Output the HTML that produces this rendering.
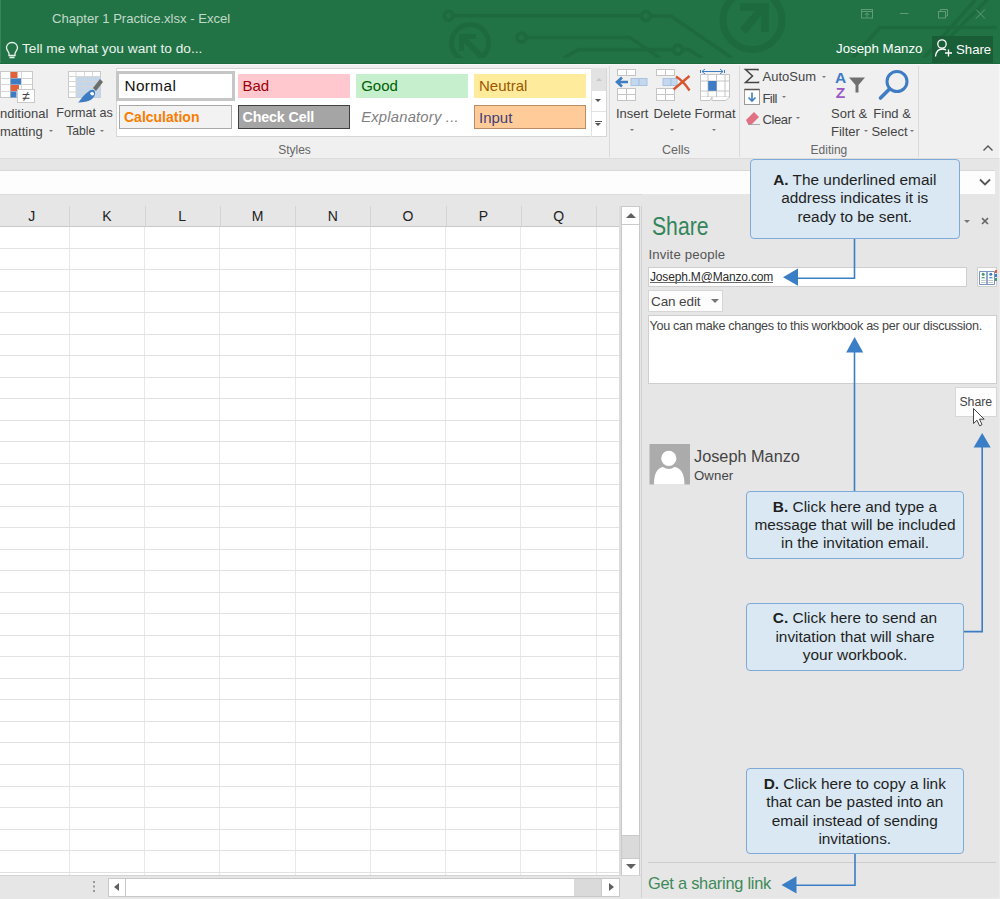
<!DOCTYPE html>
<html><head><meta charset="utf-8">
<style>
*{margin:0;padding:0;box-sizing:border-box}
html,body{width:1000px;height:899px;overflow:hidden;background:#e6e6e6;font-family:"Liberation Sans",sans-serif}
.a{position:absolute;white-space:nowrap}
#title{left:0;top:0;width:1000px;height:64px;background:#217346;overflow:hidden}
#ribbon{left:0;top:64px;width:1000px;height:94px;background:#f0f0f0;border-top:1px solid #f7f7f7}
.rt{font-size:13px;color:#444}
.gl{font-size:12.5px;color:#666}
.cell{position:absolute;height:25px;font-size:14.5px;padding-left:5px;line-height:24px}
.callout{position:absolute;background:#d9e8f3;border:1px solid #7fa9d8;border-radius:4px;font-size:15.4px;color:#1f1f1f;text-align:center;line-height:18.35px}
.callout b{font-weight:bold}
</style></head><body>

<!-- TITLE BAR -->
<div id="title" class="a">
<svg class="a" style="left:0;top:0" width="1000" height="58" viewBox="0 0 1000 58">
 <g fill="none" stroke="#1e6a3f" stroke-width="3.6">
  <circle cx="448.6" cy="15.6" r="4.5"/>
  <path d="M453 15.6 H641.5"/>
  <circle cx="646" cy="16" r="4.5"/>
  <path d="M650.5 16 H671 L732 58"/>
  <circle cx="521.5" cy="37.5" r="4.5"/>
  <path d="M526 37.5 H630 L660 58"/>
  <path d="M563.5 58 L578.5 49.6 H673.5"/>
  <circle cx="678" cy="49.6" r="4.5"/>
  <path d="M682.5 49.6 H689 L702 58"/>
  <path d="M852.5 58 L880 27.5 H997"/>
  <path d="M924 58 L975 0"/>
  <path d="M940 47 L992 -5"/>
 </g>
 <g fill="none" stroke="#1e6a3f" stroke-width="5">
  <circle cx="470" cy="43" r="18.5"/>
 </g>
 <g fill="#1e6a3f">
  <path d="M459 34 H476 V39 H468 L482 53 L478 57 L464 43 V51 H459 Z"/>
 </g>
 <g fill="none" stroke="#1e6a3f" stroke-width="7">
  <circle cx="752.5" cy="20" r="29.5"/>
 </g>
 <g fill="#1e6a3f">
  <path d="M740 3 H769 V32 H761 V16 L746 34 L740 28 L755 11 H740 Z"/>
 </g>
</svg>
<div class="a" style="left:52px;top:10.6px;font-size:13.1px;color:#c1d9c9">Chapter 1 Practice.xlsx - Excel</div>
<!-- window controls -->
<svg class="a" style="left:855px;top:4px" width="140" height="20" viewBox="855 4 140 20">
 <g fill="none" stroke="#5f9c77" stroke-width="1">
  <rect x="861.5" y="9.5" width="11" height="8.5"/>
  <path d="M861.5 11.5 H872.5 M867 17.5 V13 M864.8 15 L867 12.8 L869.2 15"/>
  <path d="M900 13.5 H908.5"/>
  <rect x="938.5" y="11.5" width="7" height="6.5"/>
  <path d="M940.5 11.5 V9.5 H947.5 V16 H945.5"/>
  <path d="M976 9.5 L985 18.5 M985 9.5 L976 18.5"/>
 </g>
</svg>
<!-- tell me -->
<svg class="a" style="left:4px;top:41px" width="16" height="18" viewBox="0 0 16 18">
 <path d="M8 1.5 C4.5 1.5 2.5 4 2.5 6.8 C2.5 9.2 4.5 10.5 5 12.5 V14.5 H11 V12.5 C11.5 10.5 13.5 9.2 13.5 6.8 C13.5 4 11.5 1.5 8 1.5 Z M5.5 16.5 H10.5" fill="none" stroke="#e8f1eb" stroke-width="1.3"/>
</svg>
<div class="a" style="left:22px;top:41.4px;font-size:13.7px;color:#eaf2ec">Tell me what you want to do...</div>
<div class="a" style="left:836px;top:41px;font-size:13.3px;color:#fff">Joseph Manzo</div>
<div class="a" style="left:932px;top:36px;width:61px;height:28px;background:#1a5e38"></div>
<svg class="a" style="left:934px;top:38px" width="20" height="20" viewBox="0 0 20 20">
 <g fill="none" stroke="#fff" stroke-width="1.3">
  <circle cx="8" cy="6" r="4.2"/>
  <path d="M1.5 18.5 C2 13.5 5 11 8.5 11 C10 11 11 11.3 12 12"/>
  <path d="M14.5 11.5 V18.5 M11 15 H18"/>
 </g>
</svg>
<div class="a" style="left:956px;top:42px;font-size:13.2px;color:#fff">Share</div>
</div>

<!-- RIBBON -->
<div id="ribbon" class="a"></div>

<!-- ribbon content -->
<div class="a" style="left:115.5px;top:67.5px;width:491px;height:69px;background:#fff;border:1px solid #d6d6d6"></div>
<!-- conditional formatting icon -->
<svg class="a" style="left:0;top:70px" width="40" height="34" viewBox="0 70 40 34">
 <g fill="#fff" stroke="#c8c8c8" stroke-width="1">
  <rect x="0.5" y="71.5" width="32" height="26"/>
 </g>
 <g stroke="#d4d4d4" stroke-width="1">
  <path d="M0.5 78.5 H32.5 M0.5 84.5 H32.5 M0.5 91.5 H32.5 M10.5 71.5 V97.5 M21.5 71.5 V97.5"/>
 </g>
 <rect x="10.5" y="72" width="7" height="6" fill="#e0613a"/>
 <rect x="10.5" y="78.5" width="10.5" height="6" fill="#3e7cc4"/>
 <rect x="10.5" y="85" width="8.5" height="6" fill="#e0613a"/>
 <rect x="10.5" y="91.5" width="6" height="6" fill="#3e7cc4"/>
 <rect x="17.5" y="89.5" width="17" height="13" fill="#fff" stroke="#c8c8c8"/>
 <text x="26" y="100.5" font-size="14" text-anchor="middle" fill="#444" font-family="Liberation Sans">≠</text>
</svg>
<div class="a rt" style="left:0;top:106.2px">nditional</div>
<div class="a rt" style="left:0;top:124px">matting</div>
<div class="a" style="left:49px;top:130px;border-left:2.5px solid transparent;border-right:2.5px solid transparent;border-top:2.5px solid #777"></div>
<!-- format as table icon -->
<svg class="a" style="left:66px;top:69px" width="40" height="36" viewBox="66 69 40 36">
 <rect x="68.5" y="71.5" width="32" height="26" fill="#fff" stroke="#c8c8c8"/>
 <rect x="76" y="76.5" width="24.5" height="21" fill="#c3d6ec"/>
 <g stroke="#d6d6d6" stroke-width="1" fill="none">
  <path d="M68.5 76.5 H100.5 M68.5 81.5 H100.5 M68.5 86.5 H100.5 M68.5 92 H100.5 M76 71.5 V97.5 M84.5 71.5 V97.5 M92.5 71.5 V97.5"/>
 </g>
 <path d="M93 88 L100 79 L103 82 L96 91 Z" fill="#6d6d6d"/>
 <path d="M88 92 C92 88 96 90 95 94 C94 99 90 102 78 102.5 C81 100 84 94 88 92 Z" fill="#3e7cc4"/>
 <path d="M90 93 C92 91 94.5 92 94 94.5 C93 96 91 96 90 93 Z" fill="#fff"/>
</svg>
<div class="a rt" style="left:56.2px;top:106.2px;font-size:12.6px">Format as</div>
<div class="a rt" style="left:66.2px;top:124px;font-size:12.2px">Table</div>
<div class="a" style="left:100px;top:130px;border-left:2.5px solid transparent;border-right:2.5px solid transparent;border-top:2.5px solid #777"></div>

<!-- styles cells -->
<div class="a" style="left:116.3px;top:71px;width:118.3px;height:30.1px;border:3px solid #c6c6c6;background:#fff"></div>
<div class="a" style="left:124.5px;top:77px;font-size:15.3px;letter-spacing:0.4px;color:#111">Normal</div>
<div class="a" style="left:237.5px;top:73.8px;width:112px;height:24.2px;background:#ffc7ce"></div>
<div class="a" style="left:242.5px;top:77px;font-size:15px;color:#9c0006">Bad</div>
<div class="a" style="left:356px;top:73.8px;width:112px;height:24.2px;background:#c6efce"></div>
<div class="a" style="left:361.2px;top:77px;font-size:15px;color:#006100">Good</div>
<div class="a" style="left:474px;top:73.8px;width:112px;height:24.2px;background:#ffeb9c"></div>
<div class="a" style="left:479px;top:77px;font-size:15px;color:#9c5700">Neutral</div>
<div class="a" style="left:119px;top:104.6px;width:112.5px;height:24.4px;background:#f2f2f2;border:1px solid #a8a8a8"></div>
<div class="a" style="left:124px;top:109px;font-size:14px;font-weight:bold;color:#fa7d00">Calculation</div>
<div class="a" style="left:237.5px;top:104.6px;width:112px;height:24.4px;background:#a5a5a5;border:1.5px solid #3f3f3f"></div>
<div class="a" style="left:242.5px;top:108.9px;font-size:14.3px;font-weight:bold;color:#fff;letter-spacing:-0.15px">Check Cell</div>
<div class="a" style="left:361.2px;top:108.6px;font-size:14.8px;letter-spacing:0.2px;font-style:italic;color:#7f7f7f">Explanatory ...</div>
<div class="a" style="left:474px;top:104.6px;width:112px;height:24.4px;background:#ffcc99;border:1px solid #b88c66"></div>
<div class="a" style="left:479px;top:108.6px;font-size:15px;color:#3f3f76">Input</div>
<!-- gallery scroll -->
<div class="a" style="left:590.5px;top:67.5px;width:16px;height:69px;border-left:1px solid #e2e2e2"></div>
<div class="a" style="left:591px;top:68px;width:15px;height:22.5px;background:#e2e2e2"></div>
<div class="a" style="left:591px;top:111px;width:15px;height:1px;background:#e2e2e2"></div>
<div class="a" style="left:595.5px;top:78px;border-left:3.5px solid transparent;border-right:3.5px solid transparent;border-bottom:3.5px solid #c8c8c8"></div>
<div class="a" style="left:595px;top:99px;border-left:3.5px solid transparent;border-right:3.5px solid transparent;border-top:3.5px solid #555"></div>
<div class="a" style="left:595px;top:120.5px;width:7px;height:1px;background:#555"></div>
<div class="a" style="left:595px;top:123px;border-left:3.5px solid transparent;border-right:3.5px solid transparent;border-top:3.5px solid #555"></div>
<div class="a gl" style="left:278.2px;top:143.4px;font-size:12px">Styles</div>
<div class="a" style="left:609px;top:66px;width:1px;height:91px;background:#dadada"></div>

<!-- Cells group -->
<svg class="a" style="left:612px;top:66px" width="125" height="38" viewBox="612 66 125 38">
 <g fill="#fff" stroke="#c4c4c4" stroke-width="1">
  <rect x="617.5" y="69.5" width="9" height="6"/><rect x="626.5" y="69.5" width="9" height="6"/>
  <rect x="617.5" y="88.5" width="9" height="6"/><rect x="626.5" y="88.5" width="9" height="6"/>
  <rect x="617.5" y="94.5" width="9" height="6"/><rect x="626.5" y="94.5" width="9" height="6"/>
  <rect x="656.5" y="69.5" width="9" height="6"/><rect x="665.5" y="69.5" width="9" height="6"/>
  <rect x="656.5" y="88.5" width="9" height="6"/><rect x="665.5" y="88.5" width="9" height="6"/>
  <rect x="656.5" y="94.5" width="9" height="6"/><rect x="665.5" y="94.5" width="9" height="6"/>
 </g>
 <g fill="#c3d7ee" stroke="#a9c2de" stroke-width="1">
  <rect x="631" y="78.5" width="8" height="7"/><rect x="639" y="78.5" width="8" height="7"/>
  <rect x="663" y="78.5" width="8" height="7"/><rect x="671" y="78.5" width="6" height="7"/>
 </g>
 <path d="M628 82 H618 M622 77.5 L617 82 L622 86.5" fill="none" stroke="#3e7cc4" stroke-width="2.6"/>
 <path d="M673.5 89.5 L689.5 76 M676 76.5 C680 79 686 85 689.5 90.5" fill="none" stroke="#d9552f" stroke-width="2.4"/>
 <path d="M700.5 70 V73 M724.5 70 V73 M702 71.5 H723 M705 69 L702 71.5 L705 74 M720 69 L723 71.5 L720 74" fill="none" stroke="#3e7cc4" stroke-width="1"/>
 <g fill="#fff" stroke="#c4c4c4" stroke-width="1">
  <path d="M700.5 74.5 H729.5 V97 H700.5 Z"/>
  <path d="M700.5 81 H729.5 M700.5 91 H729.5 M708 74.5 V97 M716.5 74.5 V97 M725 74.5 V97"/>
  <path d="M700.5 97 V100.5 H710 L712 97 M712 97 V100.5 H726 L729.5 97"/>
 </g>
 <rect x="708.2" y="81" width="8.4" height="9.8" fill="#3e7cc4"/>
</svg>
<div class="a rt" style="left:615.9px;top:106.2px">Insert</div>
<div class="a rt" style="left:653.6px;top:106.2px">Delete</div>
<div class="a rt" style="left:694.5px;top:106.2px">Format</div>
<div class="a" style="left:630px;top:129px;border-left:2.5px solid transparent;border-right:2.5px solid transparent;border-top:2.5px solid #777"></div>
<div class="a" style="left:670px;top:129px;border-left:2.5px solid transparent;border-right:2.5px solid transparent;border-top:2.5px solid #777"></div>
<div class="a" style="left:712.2px;top:129px;border-left:2.5px solid transparent;border-right:2.5px solid transparent;border-top:2.5px solid #777"></div>
<div class="a gl" style="left:662px;top:143.4px">Cells</div>
<div class="a" style="left:739px;top:66px;width:1px;height:91px;background:#dadada"></div>

<!-- Editing group -->
<svg class="a" style="left:743px;top:68px" width="17" height="17" viewBox="743 68 17 17"><path d="M758 70.5 V69.5 H745.5 L752.5 76 L745.5 82.5 H758.5 V81.5" fill="none" stroke="#444" stroke-width="1.5"/></svg>
<div class="a rt" style="left:762.5px;top:69.3px">AutoSum</div>
<div class="a" style="left:822px;top:76px;border-left:2.5px solid transparent;border-right:2.5px solid transparent;border-top:2.5px solid #777"></div>
<svg class="a" style="left:742px;top:87px" width="22" height="40" viewBox="742 87 22 40">
 <rect x="744.5" y="89.5" width="15" height="15" fill="#fff" stroke="#9a9a9a"/>
 <path d="M744.5 89.5 H759.5" stroke="#555" stroke-width="1.5"/>
 <path d="M752 92.5 V101 M748.5 97.5 L752 101 L755.5 97.5" fill="none" stroke="#3e7cc4" stroke-width="1.6"/>
 <path d="M746 120 L754 112 L759 117 L751 125 H748.5 Z" fill="#e27084"/>
 <path d="M748 124.5 H760" stroke="#999" stroke-width="0.8"/>
</svg>
<div class="a rt" style="left:762.5px;top:90.6px;font-size:13px;letter-spacing:-0.6px">Fill</div>
<div class="a" style="left:782px;top:96px;border-left:2.5px solid transparent;border-right:2.5px solid transparent;border-top:2.5px solid #777"></div>
<div class="a rt" style="left:762.5px;top:111.6px;font-size:13px;letter-spacing:-0.4px">Clear</div>
<div class="a" style="left:796px;top:117px;border-left:2.5px solid transparent;border-right:2.5px solid transparent;border-top:2.5px solid #777"></div>
<svg class="a" style="left:830px;top:66px" width="85" height="38" viewBox="830 66 85 38">
 <text x="840.5" y="83" font-size="15.5" font-weight="bold" text-anchor="middle" fill="#3e7cc4" font-family="Liberation Sans">A</text>
 <text x="840.5" y="98.3" font-size="15.5" font-weight="bold" text-anchor="middle" fill="#9b59c5" font-family="Liberation Sans">Z</text>
 <path d="M849 77.5 H865 L858.5 85 V92.5 H855.5 V85 Z" fill="#707070"/>
 <circle cx="897" cy="81.5" r="10" fill="none" stroke="#3e7cc4" stroke-width="3"/>
 <path d="M889.5 89 L880.5 98" stroke="#3e7cc4" stroke-width="3.6" stroke-linecap="round"/>
</svg>
<div class="a rt" style="left:831px;top:105.8px">Sort &amp;</div>
<div class="a rt" style="left:873.3px;top:105.8px">Find &amp;</div>
<div class="a rt" style="left:831px;top:123.5px">Filter</div>
<div class="a rt" style="left:871.4px;top:123.5px">Select</div>
<div class="a" style="left:864px;top:129.5px;border-left:2.5px solid transparent;border-right:2.5px solid transparent;border-top:2.5px solid #777"></div>
<div class="a" style="left:910px;top:129.5px;border-left:2.5px solid transparent;border-right:2.5px solid transparent;border-top:2.5px solid #777"></div>
<div class="a gl" style="left:810.6px;top:143.4px;font-size:12px">Editing</div>
<div class="a" style="left:918px;top:66px;width:1px;height:91px;background:#dadada"></div>
<svg class="a" style="left:982px;top:144px" width="12" height="8" viewBox="0 0 12 8"><path d="M1.5 6.5 L6 2 L10.5 6.5" fill="none" stroke="#555" stroke-width="1.4"/></svg>

<div class="a" style="left:0;top:0;width:1px;height:64px;background:#3a8459"></div><div class="a" style="left:0;top:63px;width:1000px;height:1px;background:#1e6a3f"></div>
<div class="a" style="left:0;top:158px;width:1000px;height:12px;background:#e6e6e6;border-top:1px solid #dcdcdc"></div>
<div class="a" style="left:0;top:170px;width:995px;height:24px;background:#fdfdfd;border-top:1px solid #d8d8d8"></div>


<!-- FORMULA BAR / HEADER / GRID -->
<svg class="a" style="left:976px;top:176px" width="18" height="12" viewBox="976 176 18 12"><path d="M980 179.5 L985 184.5 L990 179.5" fill="none" stroke="#555" stroke-width="1.8"/></svg>
<div class="a" style="left:0;top:194px;width:642px;height:33px;background:#e6e6e6;border-top:1px solid #dadada"></div>
<svg class="a" style="left:0;top:0" width="642" height="899" viewBox="0 0 642 899" shape-rendering="crispEdges">
 <rect x="0" y="227" width="619.5" height="648" fill="#fff"/>
 <rect x="0" y="226" width="620" height="1" fill="#c9c9c9"/>
 <g fill="#d4d4d4"><rect x="69" y="206" width="1" height="20"/><rect x="145" y="206" width="1" height="20"/><rect x="220" y="206" width="1" height="20"/><rect x="295" y="206" width="1" height="20"/><rect x="370" y="206" width="1" height="20"/><rect x="446" y="206" width="1" height="20"/><rect x="521" y="206" width="1" height="20"/><rect x="596" y="206" width="1" height="20"/></g>
 <g fill="#e8e8e8"><rect x="69" y="227" width="1" height="648"/><rect x="144" y="227" width="1" height="648"/><rect x="219" y="227" width="1" height="648"/><rect x="295" y="227" width="1" height="648"/><rect x="370" y="227" width="1" height="648"/><rect x="445" y="227" width="1" height="648"/><rect x="520" y="227" width="1" height="648"/><rect x="596" y="227" width="1" height="648"/></g><g fill="#e1e1e1"><rect x="0" y="248" width="620" height="1"/><rect x="0" y="269" width="620" height="1"/><rect x="0" y="291" width="620" height="1"/><rect x="0" y="312" width="620" height="1"/><rect x="0" y="334" width="620" height="1"/><rect x="0" y="355" width="620" height="1"/><rect x="0" y="377" width="620" height="1"/><rect x="0" y="398" width="620" height="1"/><rect x="0" y="420" width="620" height="1"/><rect x="0" y="441" width="620" height="1"/><rect x="0" y="463" width="620" height="1"/><rect x="0" y="484" width="620" height="1"/><rect x="0" y="506" width="620" height="1"/><rect x="0" y="527" width="620" height="1"/><rect x="0" y="549" width="620" height="1"/><rect x="0" y="570" width="620" height="1"/><rect x="0" y="592" width="620" height="1"/><rect x="0" y="613" width="620" height="1"/><rect x="0" y="635" width="620" height="1"/><rect x="0" y="656" width="620" height="1"/><rect x="0" y="678" width="620" height="1"/><rect x="0" y="699" width="620" height="1"/><rect x="0" y="721" width="620" height="1"/><rect x="0" y="742" width="620" height="1"/><rect x="0" y="764" width="620" height="1"/><rect x="0" y="786" width="620" height="1"/><rect x="0" y="807" width="620" height="1"/><rect x="0" y="829" width="620" height="1"/><rect x="0" y="850" width="620" height="1"/><rect x="0" y="872" width="620" height="1"/></g>
</svg>
<div class="a" style="left:11.7px;top:207.5px;width:40px;text-align:center;font-size:14px;color:#222">J</div><div class="a" style="left:87.0px;top:207.5px;width:40px;text-align:center;font-size:14px;color:#222">K</div><div class="a" style="left:162.2px;top:207.5px;width:40px;text-align:center;font-size:14px;color:#222">L</div><div class="a" style="left:237.5px;top:207.5px;width:40px;text-align:center;font-size:14px;color:#222">M</div><div class="a" style="left:312.8px;top:207.5px;width:40px;text-align:center;font-size:14px;color:#222">N</div><div class="a" style="left:388.0px;top:207.5px;width:40px;text-align:center;font-size:14px;color:#222">O</div><div class="a" style="left:463.3px;top:207.5px;width:40px;text-align:center;font-size:14px;color:#222">P</div><div class="a" style="left:538.6px;top:207.5px;width:40px;text-align:center;font-size:14px;color:#222">Q</div>
<!-- vertical scrollbar -->
<div class="a" style="left:619px;top:206px;width:2px;height:669px;background:#dcdcdc"></div>
<div class="a" style="left:621px;top:206px;width:19px;height:19px;background:#fff;border:1px solid #c9c9c9"></div>
<div class="a" style="left:625.5px;top:213px;border-left:5px solid transparent;border-right:5px solid transparent;border-bottom:5.3px solid #606060"></div>
<div class="a" style="left:621px;top:225px;width:19px;height:611px;background:#fff;border:1px solid #c9c9c9;border-top:none"></div>
<div class="a" style="left:621px;top:836px;width:19px;height:22px;background:#dadada;border-left:1px solid #c9c9c9;border-right:1px solid #c9c9c9"></div>
<div class="a" style="left:621px;top:857.5px;width:19px;height:18px;background:#fff;border:1px solid #c9c9c9"></div>
<div class="a" style="left:625.5px;top:863.5px;border-left:5px solid transparent;border-right:5px solid transparent;border-top:5.3px solid #606060"></div>
<div class="a" style="left:641px;top:205.5px;width:1px;height:694px;background:#d2d2d2"></div>
<!-- horizontal scrollbar -->
<div class="a" style="left:0;top:875px;width:641px;height:24px;background:#e6e6e6;border-top:1px solid #d4d4d4"></div>
<div class="a" style="left:93px;top:881px;width:2px;height:2px;background:#999;box-shadow:0 4.5px 0 #999,0 9px 0 #999"></div>
<div class="a" style="left:107.5px;top:878px;width:19px;height:18.5px;background:#fff;border:1px solid #c9c9c9"></div>
<div class="a" style="left:113.5px;top:883px;border-top:4.5px solid transparent;border-bottom:4.5px solid transparent;border-right:5px solid #606060"></div>
<div class="a" style="left:125px;top:878px;width:449.5px;height:18.5px;background:#fff;border:1px solid #c9c9c9;border-right:none"></div>
<div class="a" style="left:574px;top:878px;width:28px;height:18.5px;background:#dadada;border-top:1px solid #c9c9c9;border-bottom:1px solid #c9c9c9"></div>
<div class="a" style="left:601px;top:878px;width:19px;height:18.5px;background:#fff;border:1px solid #c9c9c9"></div>
<div class="a" style="left:609px;top:883px;border-top:4.5px solid transparent;border-bottom:4.5px solid transparent;border-left:5px solid #606060"></div>


<!-- SHARE PANE -->
<div class="a" style="left:652px;top:211.8px;font-size:25.5px;color:#33855a;transform:scaleX(0.83);transform-origin:0 0">Share</div>
<div class="a" style="left:963.5px;top:220px;border-left:3px solid transparent;border-right:3px solid transparent;border-top:3px solid #777"></div>
<svg class="a" style="left:980px;top:216px" width="10" height="10" viewBox="980 216 10 10"><path d="M982 218.2 L988 224 M988 218.2 L982 224" stroke="#666" stroke-width="1.6"/></svg>
<div class="a" style="left:648.5px;top:247.3px;font-size:13.2px;color:#555;letter-spacing:0.15px">Invite people</div>
<div class="a" style="left:648px;top:267px;width:319px;height:20px;background:#fff;border:1px solid #cfcfcf"></div>
<div class="a" style="left:650px;top:270.3px;font-size:12px;color:#2b2b2b;letter-spacing:-0.17px;">Joseph.M@Manzo.com</div>
<div class="a" style="left:650px;top:282.2px;width:123px;height:1px;background:#6a6a6a"></div>
<svg class="a" style="left:976px;top:266px" width="22" height="22" viewBox="976 266 22 22">
 <rect x="977.5" y="267.5" width="19" height="19" fill="#fdfdfd" stroke="#d0d0d0"/>
 <path d="M979.5 271.5 H986.8 V284.5 H979.5 Z M987.2 271.5 H994.5 V284.5 H987.2 Z" fill="#fff" stroke="#6b88b5" stroke-width="0.9"/>
 <circle cx="983.2" cy="274.3" r="1.5" fill="#3e9c6f"/><path d="M981 278.3 Q983.2 275.6 985.4 278.3 Z" fill="#3e9c6f"/>
 <circle cx="990.8" cy="274.3" r="1.5" fill="#3e7cc4"/><path d="M988.6 278.3 Q990.8 275.6 993 278.3 Z" fill="#3e7cc4"/>
 <path d="M981 280.5 H985.5 M981 282.5 H985.5 M988.5 280.5 H993 M988.5 282.5 H993" stroke="#aaa" stroke-width="0.7"/>
 <rect x="995" y="270" width="2" height="3" fill="#e0613a"/><rect x="995" y="274" width="2" height="3" fill="#3e7cc4"/><rect x="995" y="278" width="2" height="3" fill="#3e9c6f"/>
</svg>
<div class="a" style="left:648px;top:290px;width:75px;height:22px;background:#fdfdfd;border:1px solid #d6d6d6"></div>
<div class="a" style="left:651px;top:293.6px;font-size:13.5px;color:#444;letter-spacing:-0.1px">Can edit</div>
<div class="a" style="left:710.5px;top:299px;border-left:4px solid transparent;border-right:4px solid transparent;border-top:4px solid #777"></div>
<div class="a" style="left:648px;top:315px;width:349px;height:69px;background:#fff;border:1px solid #cfcfcf"></div>
<div class="a" style="left:649.5px;top:318.8px;font-size:12.6px;color:#444;letter-spacing:-0.31px">You can make changes to this workbook as per our discussion.</div>
<div class="a" style="left:955px;top:387px;width:41.5px;height:29.5px;background:#fdfdfd;border:1px solid #d6d6d6"></div>
<div class="a" style="left:959.4px;top:395.2px;font-size:12.3px;color:#444">Share</div>
<svg class="a" style="left:970px;top:406px" width="18" height="24" viewBox="970 406 18 24">
 <path d="M973.5 408.5 V423.5 L977 420.2 L979.6 425.8 L982 424.7 L979.5 419.2 H984.2 Z" fill="#fff" stroke="#333" stroke-width="0.9" stroke-linejoin="round"/>
</svg>
<svg class="a" style="left:648px;top:443px" width="44" height="43" viewBox="648 443 44 43">
 <rect x="649.5" y="444" width="40.5" height="40.5" fill="#ababab"/>
 <circle cx="668.8" cy="458.4" r="7.6" fill="#fff"/>
 <path d="M654 484.5 C654 472 658 468 663 467 Q668.8 471 674.6 467 C680 468 684.5 472 684.5 484.5 Z" fill="#fff"/>
</svg>
<div class="a" style="left:694px;top:447.3px;font-size:16.3px;color:#444">Joseph Manzo</div>
<div class="a" style="left:694px;top:468px;font-size:13.2px;color:#444;letter-spacing:0.1px">Owner</div>
<div class="a" style="left:648px;top:862px;width:348px;height:1px;background:#cdcdcd"></div>
<div class="a" style="left:648px;top:874.4px;font-size:16.4px;color:#3d8a59;letter-spacing:-0.25px">Get a sharing link</div>

<!-- CALLOUTS -->
<svg class="a" style="left:0;top:0" width="1000" height="899" viewBox="0 0 1000 899">
 <g fill="none" stroke="#3a7ec6" stroke-width="1.6">
  <path d="M854.5 238 V278.3 H797"/>
  <path d="M854.5 491 V351"/>
  <path d="M963.5 631.6 H982.2 V446"/>
  <path d="M855 853.5 V885.2 H796"/>
 </g>
 <g fill="#3a7ec6">
  <path d="M783 277.3 L798 268.5 V285.8 Z"/>
  <path d="M854.6 337 L846.2 352.5 H863.2 Z"/>
  <path d="M982.2 433 L973.6 447.5 H990.7 Z"/>
  <path d="M781.5 885 L796.5 876.3 V893.6 Z"/>
 </g>
</svg>
<div class="callout" style="left:750px;top:159px;width:209.5px;height:79.5px;padding-top:11px">
<b>A.</b> The underlined email<br>address indicates it is<br>ready to be sent.</div>
<div class="callout" style="left:746px;top:491px;width:218px;height:68px;padding-top:5.6px">
<b>B.</b> Click here and type a<br>message that will be included<br>in the invitation email.</div>
<div class="callout" style="left:746px;top:603px;width:218px;height:67.5px;padding-top:5.4px">
<b>C.</b> Click here to send an<br>invitation that will share<br>your workbook.</div>
<div class="callout" style="left:746px;top:768px;width:217.5px;height:86px;padding-top:6px">
<b>D.</b> Click here to copy a link<br>that can be pasted into an<br>email instead of sending<br>invitations.</div>

<div class="a" style="left:999px;top:64px;width:1px;height:94px;background:#f7f7f7"></div><div class="a" style="left:999px;top:158px;width:1px;height:741px;background:#ececec"></div>
<div class="a" style="left:641px;top:898px;width:359px;height:1px;background:#ececec"></div>
</body></html>
